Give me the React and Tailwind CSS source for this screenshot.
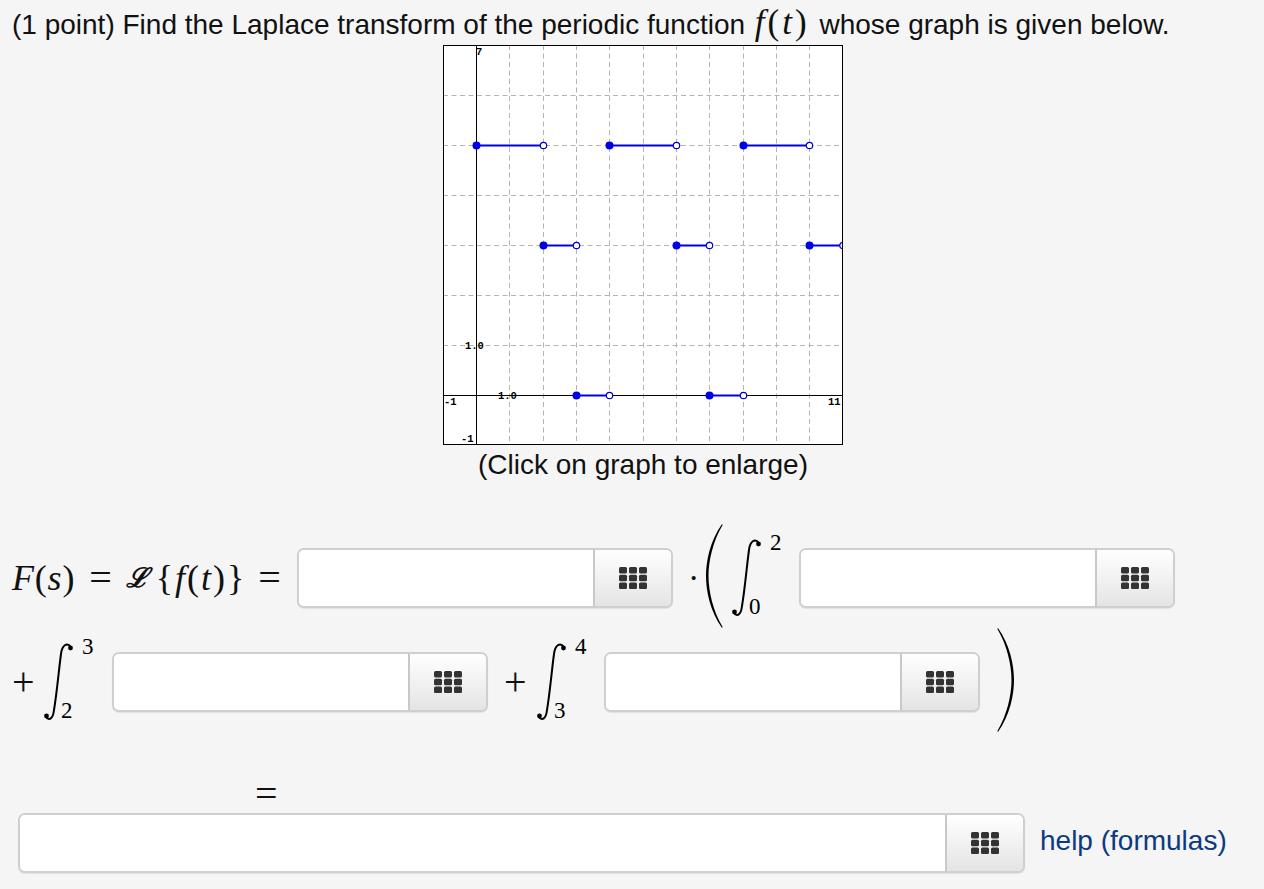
import React from "react";

const vLines = [33.5, 66.5, 100.5, 133.5, 166.5, 200.5, 233.5, 266.5, 300.5, 333.5, 366.5];
const hLines = [50.5, 100.5, 150.5, 200.5, 250.5, 300.5, 350.5];
const segments = [
    [33.5, 100.5, 100.5],
    [166.5, 233.5, 100.5],
    [300.5, 366.5, 100.5],
    [100.5, 133.5, 200.5],
    [233.5, 266.5, 200.5],
    [366.5, 400, 200.5],
    [133.5, 166.5, 350.5],
    [266.5, 300.5, 350.5],
];

function Graph() {
    return (
        <svg width="400" height="400" viewBox="0 0 400 400" className="block bg-white">
            {vLines.filter((x) => x !== 33.5).map((x) => (
                <line key={x} x1={x} y1="0" x2={x} y2="400" stroke="#b4b4b4" strokeDasharray="5 3.5" />
            ))}
            {hLines.filter((y) => y !== 350.5).map((y) => (
                <line key={y} x1="0" y1={y} x2="400" y2={y} stroke="#b4b4b4" strokeDasharray="5 3.5" />
            ))}
            <line x1="33.5" y1="0" x2="33.5" y2="400" stroke="#000" />
            <line x1="0" y1="350.5" x2="400" y2="350.5" stroke="#000" />
            <g fontFamily="'Liberation Mono', monospace" fontSize="10.5" fontWeight="700" fill="#000">
                <text x="33" y="10">7</text>
                <text x="22" y="304">1.0</text>
                <text x="55" y="354">1.0</text>
                <text x="1" y="360">-1</text>
                <text x="385" y="360">11</text>
                <text x="18" y="397">-1</text>
            </g>
            {segments.map(([a, b, y]) => (
                <g key={a + "-" + y}>
                    <line x1={a} y1={y} x2={b} y2={y} stroke="#0000dc" strokeWidth="2" />
                    <circle cx={a} cy={y} r="4" fill="#0000e6" />
                    <circle cx={b} cy={y} r="3.2" fill="#fff" stroke="#0000c8" strokeWidth="1.2" />
                </g>
            ))}
            <rect x="0.5" y="0.5" width="399" height="399" fill="none" stroke="#000" />
        </svg>
    );
}

function GridIcon() {
    const cells = [];
    for (let r = 0; r < 3; r++) {
        for (let c = 0; c < 3; c++) {
            cells.push(<rect key={r + "-" + c} x={c * 10} y={r * 7.8} width="8" height="6.5" rx="1.5" fill="#333" />);
        }
    }
    return (
        <svg width="28" height="22" viewBox="0 0 28 22">
            {cells}
        </svg>
    );
}

function AnswerBox({ width }) {
    return (
        <div className={"flex h-[60px] rounded-[7px] border-2 border-[#cfcfcf] bg-white overflow-hidden shadow-[0_1px_1px_rgba(0,0,0,0.08)] " + width}>
            <input className="flex-1 min-w-0 bg-white outline-none" />
            <button className="flex w-[78px] items-center justify-center border-l-2 border-[#c8c8c8] bg-gradient-to-b from-white to-[#e4e4e4]">
                <GridIcon />
            </button>
        </div>
    );
}

function Integral({ from, to }) {
    return (
        <div className="relative h-[80px] w-[46px] font-['Liberation_Serif',serif] text-[23px] leading-[26px] text-black">
            <svg width="32" height="80" viewBox="0 0 32 80" className="absolute left-0 top-0">
                <path d="M28 5 C24 0 19 3 18 12 C16 26 14 50 11 68 C10 77 6 79 3 75" fill="none" stroke="#000" strokeWidth="2" />
                <circle cx="27.5" cy="6" r="2.4" fill="#000" />
                <circle cx="3.5" cy="74" r="2.4" fill="#000" />
            </svg>
            <span className="absolute left-[39px] top-[-8px]">{to}</span>
            <span className="absolute left-[18px] top-[56px]">{from}</span>
        </div>
    );
}

const MATH = "font-['Liberation_Serif',serif] text-[#111]";

export default function App() {
    return (
        <div className="h-[889px] w-[1264px] overflow-hidden bg-[#f5f5f5] font-['Liberation_Sans',sans-serif] text-[28px] leading-[30px] text-[#111]">
            <p className="pl-[12px] pt-[8px] h-[45px] whitespace-nowrap">
                (1 point) Find the Laplace transform of the periodic function{" "}
                <span className={MATH + " text-[35px] mx-[2px] italic tracking-[3px]"}>f<span className="not-italic">(</span>t<span className="not-italic">)</span></span>{" "}
                whose graph is given below.
            </p>

            <div className="flex flex-col items-center w-[1286px]">
                <Graph />
                <p className="mt-[5px] h-[30px] whitespace-nowrap">(Click on graph to enlarge)</p>
            </div>

            <div className="mt-[58px] flex h-[80px] items-center pl-[12px]">
                <span className={MATH + " flex w-[285px] items-center whitespace-nowrap text-[36px]"}>
                    <span className="tracking-[0.8px]"><i>F</i>(<i>s</i>)</span>
                    <span className="ml-[14px] text-[40px]">=</span>
                    <i className="ml-[14px] text-[27px] font-bold">ℒ</i>
                    <span className="ml-[8px] tracking-[2px]">{"{"}<i>f</i>(<i>t</i>){"}"}</span>
                    <span className="ml-[12px] text-[40px]">=</span>
                </span>
                <AnswerBox width="w-[376px]" />
                <span className={MATH + " ml-[15px] w-[17px] text-[34px]"}>·</span>
                <svg width="26" height="106" viewBox="0 0 26 106" className="mb-[4px]">
                    <path d="M17 1 C5 18 1 38 1 53 C1 68 5 88 17 105 L17.6 104 C8 88 3.5 68 3.5 53 C3.5 38 8 18 17.6 2 Z" fill="#000" />
                </svg>
                <Integral from="0" to="2" />
                <div className="w-[22px]" />
                <AnswerBox width="w-[376px]" />
            </div>

            <div className="mt-[24px] flex h-[80px] items-center pl-[12px]">
                <span className={MATH + " w-[31px] text-[40px]"}>+</span>
                <Integral from="2" to="3" />
                <div className="w-[23px]" />
                <AnswerBox width="w-[376px]" />
                <span className={MATH + " ml-[16px] w-[32px] text-[40px]"}>+</span>
                <Integral from="3" to="4" />
                <div className="w-[22px]" />
                <AnswerBox width="w-[376px]" />
                <svg width="20" height="106" viewBox="0 0 20 106" className="ml-[15px] mb-[4px]">
                    <path d="M3 1 C15 18 19 38 19 53 C19 68 15 88 3 105 L2.4 104 C12 88 16.5 68 16.5 53 C16.5 38 12 18 2.4 2 Z" fill="#000" />
                </svg>
            </div>

            <div className={MATH + " mt-[57px] h-[30px] pl-[255px] text-[40px] leading-[30px]"}>=</div>

            <div className="mt-[4px] flex items-center pl-[18px]">
                <AnswerBox width="w-[1007px]" />
                <a href="#" className="mb-[4px] ml-[15px] whitespace-nowrap text-[#0b3a82]">help (formulas)</a>
            </div>
        </div>
    );
}
